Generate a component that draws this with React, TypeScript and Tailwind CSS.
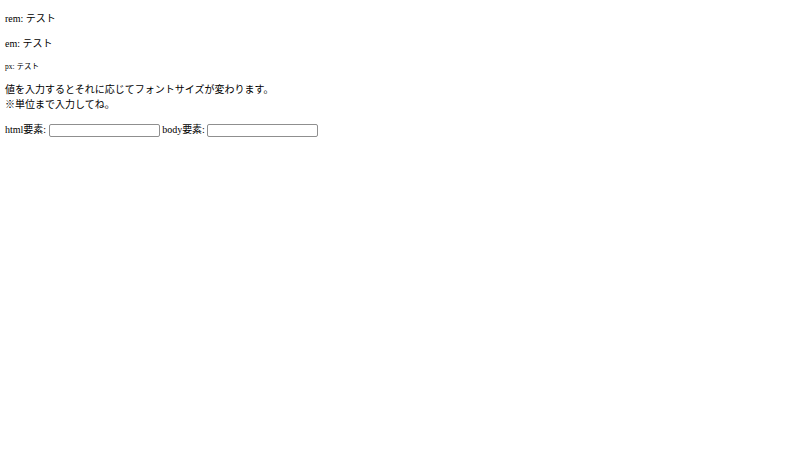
import React from "react";

export default function App() {
  return (
    <div className="w-[800px] h-[450px] bg-white text-black px-[5px] pt-[11px] text-[10px] font-['Liberation_Serif','Noto_Sans_CJK_JP',serif]">
      <div className="leading-[15px] h-[15px] mb-[10px]">rem: テスト</div>
      <div className="leading-[15px] h-[15px] mb-[10px]">em: テスト</div>
      <div className="leading-[11px] h-[11px] mb-[10px] text-[7.5px]">px: テスト</div>
      <div className="leading-[15px] mb-[8px]">
        値を入力するとそれに応じてフォントサイズが変わります。
        <br />
        ※単位まで入力してね。
      </div>
      <div className="leading-[20px] h-[20px] whitespace-nowrap">
        html要素:{" "}
        <input
          type="text"
          className="inline-block align-middle w-[111px] h-[13px] border border-[#8f8f8f] rounded-[2px] bg-white px-[1px] text-[8px] outline-none"
        />{" "}
        body要素:{" "}
        <input
          type="text"
          className="inline-block align-middle w-[111px] h-[13px] border border-[#8f8f8f] rounded-[2px] bg-white px-[1px] text-[8px] outline-none"
        />
      </div>
    </div>
  );
}
